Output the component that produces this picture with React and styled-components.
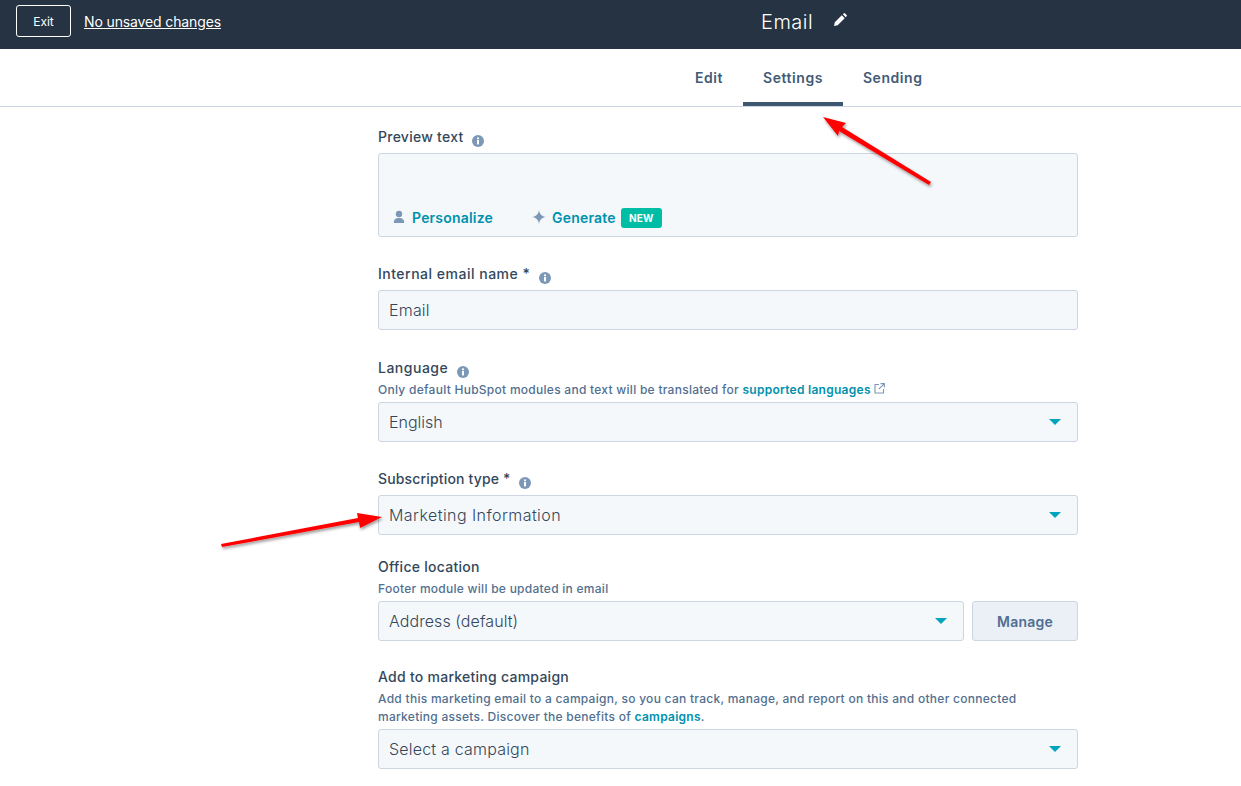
import React from "react";
import styled, { createGlobalStyle } from "styled-components";

const Global = createGlobalStyle`
  html, body { margin: 0; padding: 0; background: #fff; }
  body { font-family: Inter, "Noto Sans", sans-serif; color: #33475b; }
  * { box-sizing: border-box; }
`;
const Page = styled.div`position: relative; width: 1241px; height: 786px; overflow: hidden;`;
const Header = styled.header`
  height: 49px; background: #253342; display: grid; grid-template-columns: 1fr auto 1fr;
  align-items: center; padding: 0 16px; position: relative;
`;
const HeaderLeft = styled.div`display: flex; align-items: center; gap: 13px; margin-top: -7px;`;
const ExitButton = styled.button`
  width: 55px; height: 32px; background: transparent; border: 1px solid #fff; border-radius: 3px;
  color: #fff; font: 400 12px Inter, sans-serif; letter-spacing: 0; padding: 0;
`;
const SaveLink = styled.a`color: #fff; font-size: 14px; text-decoration: underline; letter-spacing: -.13px;`;
const Title = styled.div`
  position: absolute; left: 761px; top: 9px; display: flex; align-items: center; gap: 20px;
  color: #fff; font-size: 20px; font-weight: 300; letter-spacing: .5px; line-height: 26px;
`;
const Tabs = styled.nav`
  height: 58px; border-bottom: 1px solid #cbd6e2; display: flex; padding-left: 675px;
`;
const Tab = styled.a`
  height: 57px; padding: 4px 20px 0; display: flex; align-items: center;
  font-size: 14px; font-weight: 600; letter-spacing: .55px; color: #425b76;
  border-bottom: 4px solid ${p => (p.$active ? "#3e5771" : "transparent")};
`;
const Form = styled.main`width: 700px; margin-left: 378px; padding-top: 20px;`;
const Field = styled.section`margin-top: ${p => p.$top || 0}px;`;
const Label = styled.label`
  display: flex; align-items: center; height: 20px; padding-bottom: 2px; font-size: 14px; font-weight: 500;
  letter-spacing: ${p => p.$track ?? 0.26}px; color: #33475b;
`;
const InfoIcon = styled.svg`width: 12px; height: 12px; margin: 10px 0 0 9px; flex: none;`;
const Help = styled.p`
  margin: 3px 0 0; font-size: 12px; line-height: 18px; font-weight: 500; letter-spacing: .27px; color: #516f90;
`;
const Link = styled.a`color: #0091ae; font-weight: 600;`;
const Control = styled.div`
  margin-top: ${p => p.$top ?? 6}px; height: 40px; flex: 1; background: #f5f8fa; border: 1px solid #cbd6e2;
  border-radius: 3px; display: flex; align-items: center; justify-content: space-between;
  padding: 0 16px 1px 10px; font-size: 16px; font-weight: 300; letter-spacing: ${p => p.$track ?? 0.2}px; color: #33475b;
`;
const Caret = styled.span`
  width: 0; height: 0; border-left: 6px solid transparent; border-right: 6px solid transparent;
  border-top: 6px solid #00a4bd;
`;
const PreviewBox = styled.div`
  margin-top: 6px; height: 84px; background: #f5f8fa; border: 1px solid #cbd6e2; border-radius: 3px;
  display: flex; align-items: flex-end; padding: 0 13px 8px;
`;
const Action = styled.a`
  display: flex; align-items: center; height: 20px; color: #0091ae; font-weight: 600; font-size: 14px;
  letter-spacing: .2px; margin-right: ${p => p.$gap || 0}px; position: relative; top: -1px;
`;
const ActionIcon = styled.svg`width: 14px; height: 14px; margin-right: 6px; flex: none;`;
const NewBadge = styled.span`
  width: 41px; height: 20px; margin: 2px 0 0 5px; border-radius: 3px; background: #00bda5; color: #fff;
  font-size: 10px; font-weight: 700; letter-spacing: .2px; display: flex; align-items: center; justify-content: center;
`;
const Row = styled.div`display: flex; gap: 8px; margin-top: 3px;`;
const ManageButton = styled.button`
  width: 106px; height: 40px; background: #eaf0f6; border: 1px solid #cbd6e2; border-radius: 3px;
  color: #506e91; font: 600 14px Inter, sans-serif; letter-spacing: .2px; padding: 0;
`;
const ArrowLayer = styled.svg`position: absolute; left: 0; top: 0; pointer-events: none;`;

const Info = () => (
  <InfoIcon viewBox="0 0 12 12">
    <circle cx="6" cy="6" r="6" fill="#7c98b6" />
    <rect x="5" y="5" width="2" height="4.400" fill="#fff" />
    <circle cx="6" cy="3.300" r="1.100" fill="#fff" />
  </InfoIcon>
);
const Select = ({ children, top, track }) => (
  <Control $top={top} $track={track}>{children}<Caret /></Control>
);

export default function App() {
  return (
    <Page>
      <Global />
      <Header>
        <HeaderLeft>
          <ExitButton>Exit</ExitButton>
          <SaveLink>No unsaved changes</SaveLink>
        </HeaderLeft>
        <Title>
          Email
          <svg width="14" height="14" viewBox="0 0 14 14" style={{ marginTop: -4 }}>
            <path d="M1 13l.8-3.700 7-7 2.900 2.900-7 7zM9.800 1.300l.9-.9a1 1 0 0 1 1.400 0l1.500 1.500a1 1 0 0 1 0 1.400l-.9.9z" fill="#fff" />
          </svg>
        </Title>
      </Header>
      <Tabs>
        <Tab>Edit</Tab>
        <Tab $active>Settings</Tab>
        <Tab>Sending</Tab>
      </Tabs>
      <Form>
        <Field>
          <Label>Preview text<Info /></Label>
          <PreviewBox>
            <Action $gap={39}>
              <ActionIcon viewBox="0 0 14 14">
                <circle cx="7" cy="4" r="3.200" fill="#7c98b6" />
                <path d="M2 13c-.6-3 1.400-5 5-5s5.600 2 5 5z" fill="#7c98b6" />
              </ActionIcon>
              Personalize
            </Action>
            <Action>
              <ActionIcon viewBox="0 0 14 14">
                <path d="M7 0c.6 4 2.500 6.400 7 7-4.500.6-6.400 3-7 7-.6-4-2.500-6.400-7-7 4.500-.6 6.400-3 7-7z" fill="#7c98b6" />
              </ActionIcon>
              Generate
              <NewBadge>NEW</NewBadge>
            </Action>
          </PreviewBox>
        </Field>
        <Field $top={27}>
          <Label $track={0.5}>Internal email name *<Info /></Label>
          <Control>Email</Control>
        </Field>
        <Field $top={28}>
          <Label $track={0.5}>Language<Info /></Label>
          <Help>
            Only default HubSpot modules and text will be translated for <Link>supported languages</Link>{" "}
            <svg width="11" height="11" viewBox="0 0 11 11" fill="none" stroke="#7c98b6" strokeWidth="1.100">
              <path d="M5 1.500H1v8.500h8.500V6M6.500.6h3.900v3.900M10.200.8L4.800 6.200" />
            </svg>
          </Help>
          <Select top={3} track={0}>English</Select>
        </Field>
        <Field $top={27}>
          <Label $track={0.16}>Subscription type *<Info /></Label>
          <Select track={0.44}>Marketing Information</Select>
        </Field>
        <Field $top={22}>
          <Label>Office location</Label>
          <Help>Footer module will be updated in email</Help>
          <Row>
            <Select top={0} track={0.08}>Address (default)</Select>
            <ManageButton>Manage</ManageButton>
          </Row>
        </Field>
        <Field $top={26}>
          <Label>Add to marketing campaign</Label>
          <Help>
            Add this marketing email to a campaign, so you can track, manage, and report on this and other connected<br />
            marketing assets. Discover the benefits of <Link>campaigns</Link>.
          </Help>
          <Select top={3}>Select a campaign</Select>
        </Field>
      </Form>
      <ArrowLayer width="1241" height="786" viewBox="0 0 1241 786">
        <defs>
          <filter id="sh" x="-20%" y="-20%" width="140%" height="140%">
            <feDropShadow dx="1" dy="2" stdDeviation="1.500" floodColor="#000" floodOpacity=".4" />
          </filter>
        </defs>
        <g fill="#f00" filter="url(#sh)">
          <path d="M823 117L846 123 842 127 931 182 929 185 839 131 838 136z" />
          <path d="M221 544L358 518 357 513 382 517 360 528 359 522 222 547z" />
        </g>
      </ArrowLayer>
    </Page>
  );
}
